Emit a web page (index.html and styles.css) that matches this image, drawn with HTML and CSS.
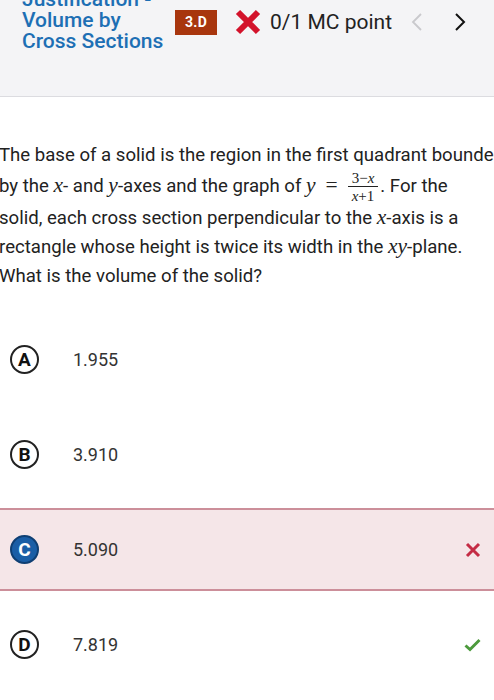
FILE: index.html
```html
<!DOCTYPE html>
<html>
<head>
<meta charset="utf-8">
<link rel="stylesheet" href="styles.css">
</head>
<body>
<div class="page">
  <header class="top">
    <div class="title">Justification -<br>Volume by<br>Cross Sections</div>
    <div class="meta">
      <span class="badge">3.D</span>
      <svg class="bigx" width="26" height="26" viewBox="0 0 26 26"><path d="M3 3 L23 23 M23 3 L3 23" stroke="#d3132b" stroke-width="6" stroke-linecap="butt"/></svg>
      <span class="score">0/1 MC point</span>
      <svg class="chev prev" width="14" height="20" viewBox="0 0 14 20"><path d="M11 2 L3 10 L11 18" fill="none" stroke="#c9c9cc" stroke-width="1.8"/></svg>
      <svg class="chev next" width="14" height="20" viewBox="0 0 14 20"><path d="M3 2 L11 10 L3 18" fill="none" stroke="#111" stroke-width="2"/></svg>
    </div>
  </header>
  <section class="question">
    <p class="stem">The base of a solid is the region in the first quadrant bounded<br>by the <i class="m">x</i>- and <i class="m">y</i>-axes and the graph of <i class="m">y</i><span class="eq">=</span><span class="frac"><span class="num">3−<i class="m">x</i></span><span class="den"><i class="m">x</i>+1</span></span>. For the<br>solid, each cross section perpendicular to the <i class="m">x</i>-axis is a<br>rectangle whose height is twice its width in the <i class="m">xy</i>-plane.<br>What is the volume of the solid?</p>
  </section>
  <ul class="options">
    <li class="opt"><span class="letter">A</span><span class="val">1.955</span></li>
    <li class="opt"><span class="letter">B</span><span class="val">3.910</span></li>
    <li class="opt wrong"><span class="letter sel">C</span><span class="val">5.090</span>
      <svg class="mark" width="16" height="16" viewBox="0 0 16 16"><path d="M2 2 L14 14 M14 2 L2 14" stroke="#c42c45" stroke-width="3"/></svg></li>
    <li class="opt"><span class="letter">D</span><span class="val">7.819</span>
      <svg class="mark" width="17" height="14" viewBox="0 0 17 14"><path d="M1.5 7.5 L6 11.5 L15.5 2" fill="none" stroke="#4c9a3c" stroke-width="3"/></svg></li>
  </ul>
</div>
</body>
</html>
```
FILE: styles.css
```css
html, body {
  margin: 0;
  padding: 0;
  background: #ffffff;
}
body {
  overflow: hidden;
  font-family: Roboto, "Liberation Sans", Arial, sans-serif;
  color: #222;
}
.page {
  width: 494px;
  overflow: hidden;
}
.top {
  background: #f4f4f6;
  border-bottom: 1px solid #dcdce0;
  height: 108px;
  margin-top: -11px;
  display: flex;
  align-items: flex-start;
  padding-left: 22px;
  box-sizing: border-box;
}
.title {
  color: #1d6fb4;
  font-weight: 500;
  font-size: 21px;
  line-height: 21px;
  width: 153px;
  flex: none;
}
.meta {
  display: flex;
  align-items: center;
  margin-top: 20px;
  height: 26px;
}
.badge {
  background: #a8360e;
  color: #fff;
  font-weight: 700;
  font-size: 14px;
  width: 42px;
  height: 25px;
  display: flex;
  align-items: center;
  justify-content: center;
  letter-spacing: 0.3px;
}
.bigx {
  margin-left: 18px;
}
.score {
  margin-left: 9px;
  font-size: 21px;
  color: #222;
}
.chev.prev {
  margin-left: 18px;
}
.chev.next {
  margin-left: 29px;
}
.question {
  padding-top: 44px;
  margin-left: -1px;
}
.stem {
  margin: 0;
  white-space: nowrap;
  font-size: 18.6px;
  line-height: 29px;
  color: #222;
}
.m {
  font-family: "Liberation Serif", "DejaVu Serif", serif;
  font-style: italic;
  font-size: 21.5px;
  line-height: 1;
}
.eq {
  font-family: "Liberation Serif", serif;
  font-size: 21.5px;
  line-height: 1;
  margin: 0 10px 0 10px;
}
.frac {
  display: inline-block;
  vertical-align: middle;
  text-align: center;
  font-family: "Liberation Serif", serif;
  font-size: 15px;
  line-height: 14px;
  margin: 1px 2px 1px 0;
}
.frac .m {
  font-size: 15px;
  line-height: 14px;
}
.num {
  display: block;
  border-bottom: 1px solid #222;
  padding: 0 4px 1px;
}
.den {
  display: block;
  padding: 2px 4px 0;
}
.options {
  list-style: none;
  margin: 0;
  padding: 0;
  padding-top: 27px;
}
.opt {
  height: 83px;
  box-sizing: border-box;
  display: flex;
  align-items: center;
  padding-left: 10px;
  padding-right: 13px;
  margin-bottom: 12px;
  border-top: 1px solid transparent;
  border-bottom: 1px solid transparent;
}
.opt.wrong {
  background: #f5e6e8;
  border-top: 2px solid #cc8f9a;
  border-bottom: 2px solid #cc8f9a;
}
.letter {
  width: 25px;
  height: 25px;
  border: 2px solid #222;
  border-radius: 50%;
  display: flex;
  align-items: center;
  justify-content: center;
  font-weight: 700;
  font-size: 19px;
  color: #111;
  flex: none;
}
.letter.sel {
  background: #1a5ea6;
  border-color: #0f3f73;
  color: #fff;
}
.val {
  margin-left: 34px;
  font-size: 18px;
  color: #333;
  flex: 1;
}
.mark {
  flex: none;
}
```
